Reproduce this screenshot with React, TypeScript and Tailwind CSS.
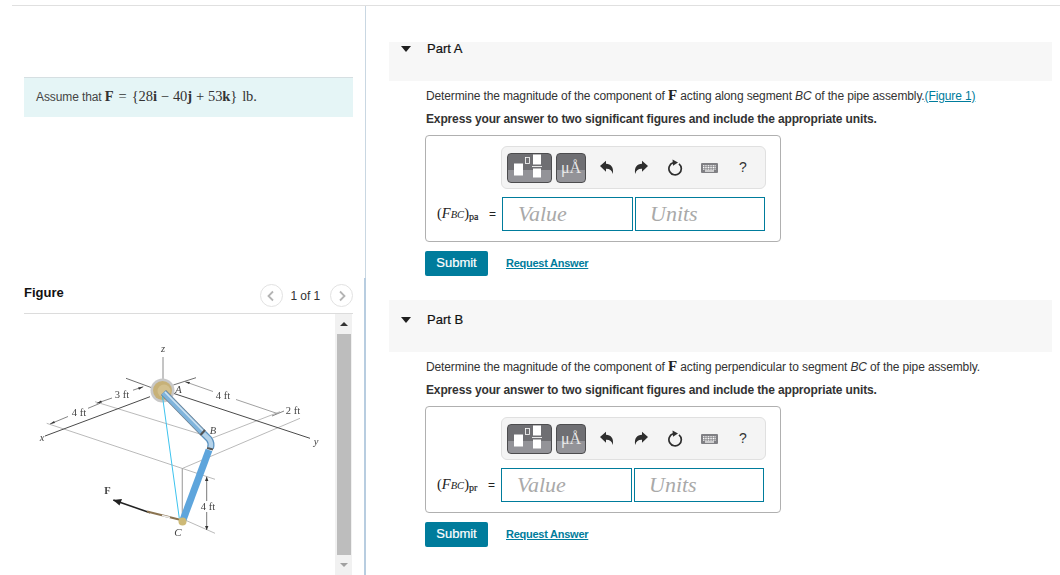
import React from "react";

const serif = "font-['Liberation_Serif',serif]";

function Undo({ flip }: { flip?: boolean }) {
  return (
    <svg width="16" height="15" viewBox="0 0 16 15" className={flip ? "-scale-x-100" : ""}>
      <path d="M1 6 L7 0.8 V3.8 C12 3.8 15 7.5 13.8 14 C12.8 10 10.4 8.6 7 8.8 V11.8 Z" fill="#2e2e2e" />
    </svg>
  );
}

function Refresh() {
  return (
    <svg width="16" height="17" viewBox="0 0 16 17">
      <path d="M6 3.8 A6.2 6.2 0 1 0 12 4.8" fill="none" stroke="#2e2e2e" strokeWidth="1.7" />
      <path d="M5.5 0.5 L11 3.4 L6 6.8 Z" fill="#2e2e2e" />
    </svg>
  );
}

function Keyboard() {
  const keys = [];
  for (let r = 0; r < 3; r++) {
    for (let c = 0; c < 8; c++) {
      keys.push(<rect key={`${r}-${c}`} x={2 + c * 1.65} y={2.2 + r * 1.7} width="1.1" height="1.1" fill="#fff" />);
    }
  }
  return (
    <svg width="17" height="10" viewBox="0 0 17 10">
      <rect x="0" y="0" width="17" height="10" rx="1" fill="#808084" />
      {keys}
      <rect x="4" y="7.4" width="9" height="1.2" fill="#fff" />
    </svg>
  );
}

function Toolbar() {
  return (
    <div className="ml-[75px] w-[265px] h-[43px] rounded-[6px] border border-[#e0e0e0] bg-[#f4f4f4] flex items-center pl-[5px]">
      <div className="w-[45px] h-[30px] rounded-[4px] border border-[#4c4c4e] bg-[linear-gradient(#6f6f73_0,#6f6f73_56%,#939398_56%,#939398_100%)] overflow-hidden">
        <svg width="43" height="28" viewBox="0 0 43 28">
          <rect x="6" y="9.5" width="9" height="12" fill="#fff" />
          <rect x="17.5" y="3.5" width="4" height="6" fill="none" stroke="#fff" strokeWidth="0.8" />
          <rect x="25" y="0.5" width="8" height="10" fill="#fff" />
          <rect x="24" y="12" width="10" height="1" fill="#e8e8e8" />
          <rect x="25" y="14.5" width="8" height="9" fill="#fff" />
        </svg>
      </div>
      <div className={`${serif} ml-[4px] w-[30px] h-[30px] rounded-[4px] border border-[#4c4c4e] bg-[linear-gradient(#6f6f73_0,#6f6f73_56%,#939398_56%,#939398_100%)] flex items-center justify-center text-[16px] text-[#e8e8e8]`}>
        μÅ
      </div>
      <div className="ml-[13px] w-[16px] flex justify-center"><Undo /></div>
      <div className="ml-[18px] w-[16px] flex justify-center"><Undo flip /></div>
      <div className="ml-[18px] w-[16px] flex justify-center"><Refresh /></div>
      <div className="ml-[18px] w-[17px] flex justify-center"><Keyboard /></div>
      <div className="ml-[17px] w-[16px] text-center text-[14px] text-[#333]">?</div>
    </div>
  );
}

function Part({
  title,
  headerClass,
  text,
  sub,
  labelClass,
}: {
  title: string;
  headerClass: string;
  text: string;
  sub: string;
  labelClass: string;
}) {
  return (
    <section>
      <div className={`bg-[#f7f7f7] ${headerClass}`}>
        <div className="flex items-center h-[14px]">
          <span className="ml-[12px] w-0 h-0 border-x-[5px] border-x-transparent border-t-[6px] border-t-[#1f1f1f]" />
          <span className="ml-[16px] text-[13px] text-[#111] [-webkit-text-stroke:0.2px_#111]">{title}</span>
        </div>
      </div>
      <div className="pl-[37px]">
        <p className="mt-[6px] h-[16px] leading-[16px] text-[12px] tracking-[-0.125px] text-[#333] whitespace-nowrap">
          Determine the magnitude of the component of <b className={`${serif} text-[15px] text-[#222]`}>F</b> acting {text} segment <i>BC</i> of the pipe assembly.
          {title === "Part A" && <span className="text-[#007c9c] underline">(Figure 1)</span>}
        </p>
        <p className="mt-[8px] h-[16px] leading-[16px] text-[12px] font-bold tracking-[-0.14px] text-[#333] whitespace-nowrap">
          Express your answer to two significant figures and include the appropriate units.
        </p>
      </div>
      <div className="ml-[36px] mt-[8px] w-[356px] h-[107px] rounded-[4px] border border-[#b0b0b0] pt-[10px]">
        <Toolbar />
        <div className="flex items-center mt-[8px]">
          <div className={`${serif} ${labelClass} text-[14.5px] text-[#222] whitespace-nowrap flex items-center`}>
            <span>
              (<i>F</i><i className="text-[10.5px]">BC</i>)<span className="text-[10px] align-[-2px] [-webkit-text-stroke:0.2px_#222]">{sub}</span>
            </span>
            <span className="font-['Liberation_Sans',sans-serif] text-[12px] ml-auto mr-[6px]">=</span>
          </div>
          <div className="flex gap-[2px]">
            <div className={`${serif} w-[131px] h-[34px] border border-[#007c9c] pl-[15px] italic text-[22px] leading-[32px] text-[#a9a9a9]`}>Value</div>
            <div className={`${serif} w-[130px] h-[34px] border border-[#007c9c] pl-[14px] italic text-[22px] leading-[32px] text-[#a9a9a9]`}>Units</div>
          </div>
        </div>
      </div>
      <div className="ml-[36px] mt-[9px] flex items-center">
        <div className="w-[63px] h-[25px] rounded-[2px] bg-[#007c9c] text-white text-[13px] leading-[23px] text-center [-webkit-text-stroke:0.2px_#fff]">Submit</div>
        <span className="ml-[18px] text-[11px] font-bold text-[#007c9c] underline tracking-[-0.25px]">Request Answer</span>
      </div>
    </section>
  );
}

function Figure() {
  const dark = "#4a4a4a";
  const gray = "#a8a8a8";
  const label = { fontFamily: "'Liberation Serif', serif", fontSize: 10.5, fill: "#444", textAnchor: "middle" as const };
  return (
    <svg width="311" height="261" viewBox="24 314 311 261" className="blur-[0.35px]">
      <g fill="none" strokeWidth="0.8">
        <path d="M95 401.7 L203.3 435" stroke={gray} />
        <path d="M46.7 423.3 L215 479.3" stroke={gray} />
        <path d="M211.7 438.3 L280 411.7" stroke={gray} />
        <path d="M182.7 468.3 L300 418.3" stroke={gray} />
        <path d="M182.3 468 V518" stroke={gray} strokeWidth="1.2" />
        <path d="M185 520 L215 533.3" stroke={gray} />
        <path d="M163 357 V385" stroke="#8a8a8a" strokeWidth="1" />
        <path d="M45 436 L150 396.7" stroke={dark} strokeWidth="1" />
        <path d="M173.3 393.3 L310 438.3" stroke={dark} strokeWidth="1" />
        <path d="M126 378.3 L153.3 388.3" stroke={dark} />
        <path d="M173.3 385 L196 377.7" stroke={dark} />
        <path d="M96.7 403.3 L112 398 M133 390.2 L143.3 386.7" stroke="#666" />
        <path d="M50 424 L68 416.5 M88 408.3 L100 403.3" stroke="#666" />
        <path d="M185 381.7 L213 391.5 M236 399.5 L276.7 413.3" stroke="#888" />
        <path d="M272 416 L284 411" stroke="#666" />
        <path d="M206.7 476.7 V501 M206.7 512 V530" stroke="#555" />
      </g>
      <g fill="#333">
        <path d="M143.3 386.7 L138 387.5 L139 389.8 Z" />
        <path d="M97 403.2 L102 402.6 L101 400.6 Z" />
        <path d="M50 424 L55 423 L54 421 Z" />
        <path d="M185 381.7 L190 382 L189 384 Z" />
        <path d="M206.7 476.7 L205 481 H208.4 Z" />
        <path d="M206.7 530 L205 526 H208.4 Z" />
      </g>
      <circle cx="162.5" cy="390.5" r="12" fill="#c8c8c8" />
      <circle cx="162.5" cy="390.5" r="9.5" fill="#c7b178" />
      <circle cx="164" cy="391" r="6.5" fill="#d3c08d" />
      <path d="M162.3 395 L179.3 518.3" stroke="#3dc3ee" strokeWidth="1" fill="none" />
      <path d="M163.5 392.5 L203.5 433.5" stroke="#6a7d8d" strokeWidth="7" fill="none" />
      <path d="M163.5 392.5 L203.5 433.5" stroke="#7fb4dc" strokeWidth="5.6" fill="none" />
      <path d="M165 392 L204.5 432.5" stroke="#cfe3f2" strokeWidth="1.6" fill="none" />
      <path d="M203.5 433.5 L209 439 Q212 443 210.5 448" stroke="#5a92c0" strokeWidth="7" fill="none" />
      <path d="M203.5 433.5 L209 439 Q212 443 210.5 448" stroke="#b5d3ea" strokeWidth="4.5" fill="none" />
      <path d="M200.5 435 L205 430" stroke="#555" strokeWidth="2" />
      <path d="M207 448 L213 449.5" stroke="#555" strokeWidth="2" />
      <path d="M209 450 L183 520" stroke="#5ea5dc" strokeWidth="7" fill="none" />
      <path d="M113.3 500 L150 512.7" stroke="#222" strokeWidth="1.6" />
      <path d="M113 500 L122 499 L119.5 505.5 Z" fill="#222" />
      <path d="M147 511.5 L180 519.8" stroke="#8a7350" strokeWidth="2" />
      <path d="M162 515.5 L170 517.5" stroke="#eee" strokeWidth="1.6" />
      <circle cx="182.5" cy="521.5" r="4" fill="#cdb976" />
      <text x="163" y="352" style={{ ...label, fontStyle: "italic" }}>z</text>
      <text x="42" y="441" style={{ ...label, fontStyle: "italic" }}>x</text>
      <text x="316" y="445" style={{ ...label, fontStyle: "italic" }}>y</text>
      <text x="122" y="398" style={label}>3 ft</text>
      <text x="79" y="416" style={label}>4 ft</text>
      <text x="223" y="399" style={label}>4 ft</text>
      <text x="293" y="414" style={label}>2 ft</text>
      <text x="208" y="510" style={label}>4 ft</text>
      <text x="107.5" y="494" style={{ ...label, fontWeight: 700 }}>F</text>
      <text x="178" y="536" style={{ ...label, fontStyle: "italic", fontSize: 11 }}>C</text>
      <text x="178.5" y="393" style={{ ...label, fontStyle: "italic" }}>A</text>
      <text x="213" y="434" style={{ ...label, fontStyle: "italic" }}>B</text>
    </svg>
  );
}

function Circle({ d }: { d: string }) {
  return (
    <div className="w-[23px] h-[23px] rounded-full border border-[#e2e2e2] flex items-center justify-center">
      <svg width="10" height="12" viewBox="0 0 10 12">
        <path d={d} fill="none" stroke="#b4b4b4" strokeWidth="1.8" />
      </svg>
    </div>
  );
}

export default function App() {
  return (
    <div className="w-[1060px] h-[575px] overflow-hidden bg-white font-['Liberation_Sans',Arial,sans-serif]">
      <div className="ml-[12px] h-[6px] border-b border-[#e0e0e0]" />
      <div className="flex h-[569px]">
        <aside className="relative w-[366px] shrink-0 border-r border-[#c9d7e2] pl-[24px] pr-[12px]">
          <div className="absolute right-[-1px] top-[272px] bottom-0 w-[2px] bg-[#b8cde0]" />
          <div className="mt-[71px] h-[40px] border-t border-[#d6dfe2] bg-[#e5f5f6] pl-[12px] pb-[2px] flex items-center text-[12px] tracking-[-0.1px] text-[#444] whitespace-nowrap">
            Assume that&nbsp;
            <span className={`${serif} text-[14.5px] text-[#333]`}>
              <b>F</b>
              <span className="mx-[5px]">=</span>
              {"{"}28<b>i</b>
              <span className="mx-[4px]">−</span>
              40<b>j</b>
              <span className="mx-[4px]">+</span>
              53<b>k</b>
              {"}"}
              <span className="ml-[5px]">lb.</span>
            </span>
          </div>
          <div className="mt-[163px] h-[34px] border-b border-[#dcdcdc] flex items-start justify-between">
            <h2 className="text-[13px] font-bold text-[#111] leading-[16px] mt-[5px]">Figure</h2>
            <div className="flex items-center gap-[8px] mt-[4px]">
              <Circle d="M7 1.5 L2.5 6 L7 10.5" />
              <span className="text-[12px] text-[#333] mr-[2px] tracking-[-0.1px]">1 of 1</span>
              <Circle d="M3 1.5 L7.5 6 L3 10.5" />
            </div>
          </div>
          <div className="flex h-[261px]">
            <Figure />
            <div className="w-[17px] bg-[#f1f1f1] flex flex-col items-center">
              <div className="h-[20px] flex items-center">
                <span className="w-0 h-0 border-x-[4px] border-x-transparent border-b-[4px] border-b-[#333]" />
              </div>
              <div className="w-[14px] h-[221px] bg-[#bdbdbd]" />
              <div className="h-[20px] flex items-center">
                <span className="w-0 h-0 border-x-[4px] border-x-transparent border-t-[4px] border-t-[#a0a0a0]" />
              </div>
            </div>
          </div>
        </aside>
        <main className="w-[663px] ml-[23px] pt-[36px]">
          <Part title="Part A" headerClass="h-[39px]" text="along" sub="pa" labelClass="ml-[11px] w-[65px]" />
          <div className="mt-[24px]">
            <Part title="Part B" headerClass="h-[52px] pt-[13px]" text="perpendicular to" sub="pr" labelClass="ml-[11px] w-[64px]" />
          </div>
        </main>
      </div>
    </div>
  );
}
